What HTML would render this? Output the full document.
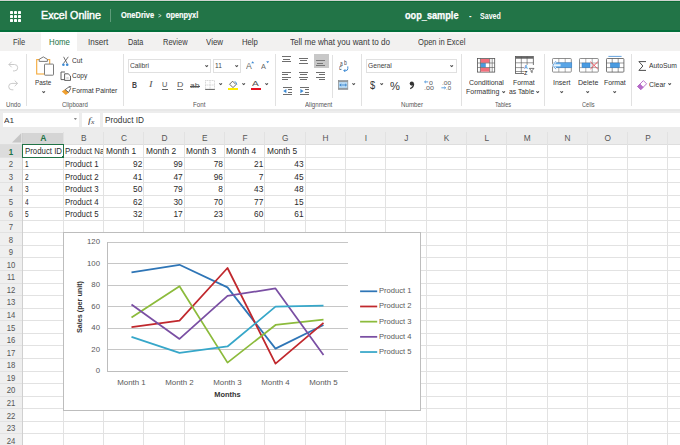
<!DOCTYPE html>
<html><head><meta charset="utf-8"><style>
html,body{margin:0;padding:0;}
body{width:680px;height:445px;overflow:hidden;position:relative;background:#fff;font-family:"Liberation Sans",sans-serif;}
</style></head><body>
<div style="position:absolute;left:0.00px;top:0.00px;width:680.00px;height:32.00px;background:#227447;"></div>
<div style="position:absolute;left:0.00px;top:29.80px;width:680.00px;height:1.80px;background:#036f3b;"></div>
<div style="position:absolute;left:0.00px;top:0.00px;width:680.00px;height:1.00px;background:#cfd3d0;"></div>
<div style="position:absolute;left:0.00px;top:1.00px;width:680.00px;height:1.00px;background:#0d6b35;"></div>
<div style="position:absolute;left:10.00px;top:11.00px;width:3.00px;height:3.00px;background:#ffffff;border-radius:0.4px"></div>
<div style="position:absolute;left:10.00px;top:15.20px;width:3.00px;height:3.00px;background:#ffffff;border-radius:0.4px"></div>
<div style="position:absolute;left:10.00px;top:19.40px;width:3.00px;height:3.00px;background:#ffffff;border-radius:0.4px"></div>
<div style="position:absolute;left:14.20px;top:11.00px;width:3.00px;height:3.00px;background:#ffffff;border-radius:0.4px"></div>
<div style="position:absolute;left:14.20px;top:15.20px;width:3.00px;height:3.00px;background:#ffffff;border-radius:0.4px"></div>
<div style="position:absolute;left:14.20px;top:19.40px;width:3.00px;height:3.00px;background:#ffffff;border-radius:0.4px"></div>
<div style="position:absolute;left:18.40px;top:11.00px;width:3.00px;height:3.00px;background:#ffffff;border-radius:0.4px"></div>
<div style="position:absolute;left:18.40px;top:15.20px;width:3.00px;height:3.00px;background:#ffffff;border-radius:0.4px"></div>
<div style="position:absolute;left:18.40px;top:19.40px;width:3.00px;height:3.00px;background:#ffffff;border-radius:0.4px"></div>
<div style="position:absolute;left:41.00px;top:14.68px;line-height:0;font-size:11.6px;font-weight:400;color:#fff;white-space:nowrap;transform:scaleX(0.9214);transform-origin:0 0;-webkit-text-stroke:0.45px #fff">Excel Online</div>
<div style="position:absolute;left:110.10px;top:9.00px;width:1.00px;height:13.00px;background:#5e9c79;"></div>
<div style="position:absolute;left:120.60px;top:16.16px;line-height:0;font-size:8.2px;font-weight:700;color:#fff;white-space:nowrap;transform:scaleX(0.9106);transform-origin:0 0;-webkit-text-stroke:0.15px #fff">OneDrive</div>
<div style="position:absolute;left:158.20px;top:15.90px;line-height:0;font-size:7.5px;font-weight:400;color:#fff;white-space:nowrap;transform:scaleX(0.7534);transform-origin:0 0;">&gt;</div>
<div style="position:absolute;left:165.60px;top:16.16px;line-height:0;font-size:8.2px;font-weight:700;color:#fff;white-space:nowrap;transform:scaleX(0.8973);transform-origin:0 0;-webkit-text-stroke:0.15px #fff">openpyxl</div>
<div style="position:absolute;left:405.00px;top:15.64px;line-height:0;font-size:10.0px;font-weight:700;color:#fff;white-space:nowrap;transform:scaleX(0.9169);transform-origin:0 0;-webkit-text-stroke:0.25px #fff">oop_sample</div>
<div style="position:absolute;left:468.50px;top:16.15px;line-height:0;font-size:8.5px;font-weight:700;color:#fff;white-space:nowrap;transform:scaleX(0.8832);transform-origin:0 0;">-</div>
<div style="position:absolute;left:480.30px;top:16.19px;line-height:0;font-size:8.4px;font-weight:700;color:#fff;white-space:nowrap;transform:scaleX(0.8445);transform-origin:0 0;">Saved</div>
<div style="position:absolute;left:0.00px;top:31.60px;width:680.00px;height:19.60px;background:#f2f1f0;"></div>
<div style="position:absolute;left:0.00px;top:31.60px;width:680.00px;height:2.20px;background:#f7f6f5;"></div>
<div style="position:absolute;left:40.60px;top:31.60px;width:36.90px;height:19.60px;background:#ffffff;"></div>
<div style="position:absolute;left:12.80px;top:42.56px;line-height:0;font-size:8.2px;font-weight:400;color:#383838;white-space:nowrap;transform:scaleX(0.9158);transform-origin:0 0;">File</div>
<div style="position:absolute;left:48.80px;top:42.56px;line-height:0;font-size:8.2px;font-weight:400;color:#217346;white-space:nowrap;transform:scaleX(0.9555);transform-origin:0 0;">Home</div>
<div style="position:absolute;left:88.20px;top:42.56px;line-height:0;font-size:8.2px;font-weight:400;color:#383838;white-space:nowrap;transform:scaleX(0.9899);transform-origin:0 0;">Insert</div>
<div style="position:absolute;left:127.60px;top:42.56px;line-height:0;font-size:8.2px;font-weight:400;color:#383838;white-space:nowrap;transform:scaleX(0.8891);transform-origin:0 0;">Data</div>
<div style="position:absolute;left:162.90px;top:42.56px;line-height:0;font-size:8.2px;font-weight:400;color:#383838;white-space:nowrap;transform:scaleX(0.9150);transform-origin:0 0;">Review</div>
<div style="position:absolute;left:206.10px;top:42.56px;line-height:0;font-size:8.2px;font-weight:400;color:#383838;white-space:nowrap;transform:scaleX(0.9702);transform-origin:0 0;">View</div>
<div style="position:absolute;left:242.10px;top:42.56px;line-height:0;font-size:8.2px;font-weight:400;color:#383838;white-space:nowrap;transform:scaleX(0.9428);transform-origin:0 0;">Help</div>
<div style="position:absolute;left:289.80px;top:42.56px;line-height:0;font-size:8.2px;font-weight:400;color:#383838;white-space:nowrap;transform:scaleX(0.9902);transform-origin:0 0;">Tell me what you want to do</div>
<div style="position:absolute;left:418.00px;top:42.56px;line-height:0;font-size:8.2px;font-weight:400;color:#383838;white-space:nowrap;transform:scaleX(0.9285);transform-origin:0 0;">Open in Excel</div>
<div style="position:absolute;left:0.00px;top:51.20px;width:680.00px;height:57.70px;background:#ffffff;"></div>
<div style="position:absolute;left:0.00px;top:108.90px;width:680.00px;height:4.20px;background:#e8e8e8;"></div>
<div style="position:absolute;left:0.00px;top:111.00px;width:680.00px;height:16.00px;background:#ededed;"></div>
<div style="position:absolute;left:26.25px;top:53.80px;width:0.90px;height:51.80px;background:#e1e1e1;"></div>
<div style="position:absolute;left:123.05px;top:53.80px;width:0.90px;height:51.80px;background:#e1e1e1;"></div>
<div style="position:absolute;left:274.85px;top:53.80px;width:0.90px;height:51.80px;background:#e1e1e1;"></div>
<div style="position:absolute;left:360.75px;top:53.80px;width:0.90px;height:51.80px;background:#e1e1e1;"></div>
<div style="position:absolute;left:461.05px;top:53.80px;width:0.90px;height:51.80px;background:#e1e1e1;"></div>
<div style="position:absolute;left:543.65px;top:53.80px;width:0.90px;height:51.80px;background:#e1e1e1;"></div>
<div style="position:absolute;left:630.95px;top:53.80px;width:0.90px;height:51.80px;background:#e1e1e1;"></div>
<div style="position:absolute;left:331.85px;top:54.60px;width:0.90px;height:43.00px;background:#e1e1e1;"></div>
<div style="position:absolute;left:5.90px;top:104.55px;line-height:0;font-size:6.5px;font-weight:400;color:#555;white-space:nowrap;transform:scaleX(0.9460);transform-origin:0 0;">Undo</div>
<div style="position:absolute;left:62.20px;top:104.55px;line-height:0;font-size:6.5px;font-weight:400;color:#555;white-space:nowrap;transform:scaleX(0.9273);transform-origin:0 0;">Clipboard</div>
<div style="position:absolute;left:193.40px;top:104.55px;line-height:0;font-size:6.5px;font-weight:400;color:#555;white-space:nowrap;transform:scaleX(0.9611);transform-origin:0 0;">Font</div>
<div style="position:absolute;left:305.00px;top:104.55px;line-height:0;font-size:6.5px;font-weight:400;color:#555;white-space:nowrap;transform:scaleX(0.9445);transform-origin:0 0;">Alignment</div>
<div style="position:absolute;left:400.60px;top:104.55px;line-height:0;font-size:6.5px;font-weight:400;color:#555;white-space:nowrap;transform:scaleX(0.9516);transform-origin:0 0;">Number</div>
<div style="position:absolute;left:494.90px;top:104.55px;line-height:0;font-size:6.5px;font-weight:400;color:#555;white-space:nowrap;transform:scaleX(0.8569);transform-origin:0 0;">Tables</div>
<div style="position:absolute;left:581.70px;top:104.55px;line-height:0;font-size:6.5px;font-weight:400;color:#555;white-space:nowrap;transform:scaleX(0.8652);transform-origin:0 0;">Cells</div>
<svg style="position:absolute;left:8.00px;top:60.00px;overflow:visible" width="11" height="12" viewBox="0 0 11 12"><path d="M0.9 4.5 H6.5 A3.2 3.2 0 0 1 6.5 10.9 H5" fill="none" stroke="#c4c4c4" stroke-width="0.9"/><path d="M3.7 1.7 L0.9 4.5 L3.7 7.3" fill="none" stroke="#c4c4c4" stroke-width="0.9"/></svg>
<svg style="position:absolute;left:8.00px;top:79.00px;overflow:visible" width="11" height="12" viewBox="0 0 11 12"><path d="M9.5 4.4 H3.9 A3.2 3.2 0 0 0 3.9 10.8 H5.4" fill="none" stroke="#c4c4c4" stroke-width="0.9"/><path d="M6.7 1.6 L9.5 4.4 L6.7 7.2" fill="none" stroke="#c4c4c4" stroke-width="0.9"/></svg>
<svg style="position:absolute;left:36.00px;top:56.00px;overflow:visible" width="18" height="20" viewBox="0 0 18 20"><rect x="0.7" y="3.6" width="13" height="14.4" fill="#fff" stroke="#f4a93a" stroke-width="1.1"/><path d="M3.2 5.4 V3.3 L7.3 0.9 L11.4 3.3 V5.4 Z" fill="#fff" stroke="#6d6d6d" stroke-width="0.9"/><rect x="8.5" y="8.1" width="9" height="11.1" rx="0.6" fill="#fff" stroke="#6d6d6d" stroke-width="0.9"/></svg>
<div style="position:absolute;left:35.00px;top:82.61px;line-height:0;font-size:6.9px;font-weight:400;color:#333;white-space:nowrap;transform:scaleX(0.9238);transform-origin:0 0;">Paste</div>
<svg style="position:absolute;left:42.00px;top:90.95px;overflow:visible" width="3.4" height="1.9" viewBox="0 0 3.4 1.9"><path d="M0.4 0.4 L1.7 1.5999999999999999 L3.0 0.4" fill="none" stroke="#444" stroke-width="1.05"/></svg>
<svg style="position:absolute;left:61.00px;top:56.00px;overflow:visible" width="9" height="10.5" viewBox="0 0 9 10.5"><path d="M2.6 0.8 L6.2 7.6 M7.3 0.8 L2.4 7.6" stroke="#505050" stroke-width="0.8" fill="none"/><circle cx="2.4" cy="8.8" r="1.3" fill="#3d8ad4"/><circle cx="6.2" cy="8.8" r="1.3" fill="#3d8ad4"/></svg>
<div style="position:absolute;left:72.00px;top:60.71px;line-height:0;font-size:6.9px;font-weight:400;color:#333;white-space:nowrap;transform:scaleX(0.9686);transform-origin:0 0;">Cut</div>
<svg style="position:absolute;left:60.00px;top:71.00px;overflow:visible" width="11.5" height="10" viewBox="0 0 11.5 10"><path d="M5 1 H1 V8.6 H4.5" fill="none" stroke="#505050" stroke-width="0.9"/><path d="M4.6 2.8 H8.2 L10.5 5 V9.4 H4.6 Z" fill="#fff" stroke="#505050" stroke-width="0.9"/><path d="M6.3 7 H8.7" stroke="#888" stroke-width="0.6"/></svg>
<div style="position:absolute;left:72.00px;top:76.21px;line-height:0;font-size:6.9px;font-weight:400;color:#333;white-space:nowrap;transform:scaleX(0.9498);transform-origin:0 0;">Copy</div>
<svg style="position:absolute;left:60.50px;top:86.00px;overflow:visible" width="11" height="9.5" viewBox="0 0 11 9.5"><path d="M0.8 5.6 L4.8 9 L8 6.4 L4 3.2 Z" fill="#f0a030"/><path d="M4.2 3.6 L7.6 6.4 L9.6 2.6 L8.4 0.6 Z" fill="#fff" stroke="#505050" stroke-width="0.85"/><path d="M8.2 0.8 L10.2 0.6" stroke="#505050" stroke-width="0.8"/></svg>
<div style="position:absolute;left:72.30px;top:90.91px;line-height:0;font-size:6.9px;font-weight:400;color:#333;white-space:nowrap;transform:scaleX(0.9927);transform-origin:0 0;">Format Painter</div>
<div style="position:absolute;left:128.00px;top:59.10px;width:83.20px;height:13.50px;background:#fff;box-sizing:border-box;border:0.9px solid #e0e0e0"></div>
<div style="position:absolute;left:130.00px;top:66.37px;line-height:0;font-size:7.0px;font-weight:400;color:#444;white-space:nowrap;transform:scaleX(0.9628);transform-origin:0 0;">Calibri</div>
<svg style="position:absolute;left:205.10px;top:64.85px;overflow:visible" width="3.4" height="1.9" viewBox="0 0 3.4 1.9"><path d="M0.4 0.4 L1.7 1.5999999999999999 L3.0 0.4" fill="none" stroke="#444" stroke-width="1.05"/></svg>
<div style="position:absolute;left:213.20px;top:59.10px;width:27.60px;height:13.50px;background:#fff;box-sizing:border-box;border:0.9px solid #e0e0e0"></div>
<div style="position:absolute;left:215.00px;top:66.37px;line-height:0;font-size:7.0px;font-weight:400;color:#444;white-space:nowrap;transform:scaleX(0.9358);transform-origin:0 0;">11</div>
<svg style="position:absolute;left:234.80px;top:64.85px;overflow:visible" width="3.4" height="1.9" viewBox="0 0 3.4 1.9"><path d="M0.4 0.4 L1.7 1.5999999999999999 L3.0 0.4" fill="none" stroke="#444" stroke-width="1.05"/></svg>
<div style="position:absolute;left:246.00px;top:66.66px;line-height:0;font-size:8.2px;font-weight:400;color:#666;white-space:nowrap;transform:scaleX(1.0604);transform-origin:0 0;">A</div>
<svg style="position:absolute;left:251.20px;top:61.00px;overflow:visible" width="3.4" height="2.4" viewBox="0 0 3.4 2.4"><path d="M0.2 2.2 L1.7 0.3 L3.2 2.2 Z" fill="#3d8ad4"/></svg>
<div style="position:absolute;left:261.30px;top:67.07px;line-height:0;font-size:7.0px;font-weight:400;color:#666;white-space:nowrap;transform:scaleX(1.0495);transform-origin:0 0;">A</div>
<svg style="position:absolute;left:266.30px;top:61.40px;overflow:visible" width="3.4" height="2.4" viewBox="0 0 3.4 2.4"><path d="M0.2 0.3 L1.7 2.2 L3.2 0.3 Z" fill="#3d8ad4"/></svg>
<div style="position:absolute;left:131.80px;top:85.56px;line-height:0;font-size:8.2px;font-weight:700;color:#444;white-space:nowrap;transform:scaleX(0.8443);transform-origin:0 0;">B</div>
<div style="position:absolute;left:148.60px;top:85.49px;line-height:0;font-size:8.4px;font-weight:400;color:#555;white-space:nowrap;transform:scaleX(1.2855);transform-origin:0 0;font-family:'Liberation Serif',serif;font-style:italic">I</div>
<div style="position:absolute;left:162.00px;top:85.27px;line-height:0;font-size:7.6px;font-weight:400;color:#555;white-space:nowrap;transform:scaleX(0.9839);transform-origin:0 0;">U</div>
<div style="position:absolute;left:162.00px;top:88.85px;width:5.60px;height:0.70px;background:#666;"></div>
<div style="position:absolute;left:176.80px;top:84.97px;line-height:0;font-size:7.6px;font-weight:400;color:#555;white-space:nowrap;transform:scaleX(1.1661);transform-origin:0 0;">D</div>
<div style="position:absolute;left:176.60px;top:88.90px;width:6.80px;height:1.30px;background:#777;"></div>
<div style="position:absolute;left:190.30px;top:85.84px;line-height:0;font-size:7.4px;font-weight:400;color:#555;white-space:nowrap;transform:scaleX(1.1420);transform-origin:0 0;">ab</div>
<div style="position:absolute;left:189.80px;top:85.65px;width:10.20px;height:0.70px;background:#555;"></div>
<svg style="position:absolute;left:205.00px;top:80.00px;overflow:visible" width="10" height="10" viewBox="0 0 10 10"><rect x="0.5" y="0.5" width="9" height="9" fill="none" stroke="#bbb" stroke-width="0.6" stroke-dasharray="1 0.6"/><path d="M5 0.5 V9.5 M0.5 5 H9.5" stroke="#bbb" stroke-width="0.6" stroke-dasharray="1 0.6"/><path d="M0.2 9.4 H9.8" stroke="#555" stroke-width="0.9"/></svg>
<svg style="position:absolute;left:218.90px;top:82.85px;overflow:visible" width="3.4" height="1.9" viewBox="0 0 3.4 1.9"><path d="M0.4 0.4 L1.7 1.5999999999999999 L3.0 0.4" fill="none" stroke="#444" stroke-width="1.05"/></svg>
<svg style="position:absolute;left:228.00px;top:79.50px;overflow:visible" width="10" height="8.5" viewBox="0 0 10 8.5"><path d="M1.6 4.2 L4.6 1.2 L8 4.6 L5 7.6 Z" fill="#fff" stroke="#444" stroke-width="0.8"/><path d="M6.6 1.6 Q8.6 1.8 8.8 4.6" fill="none" stroke="#3d8ad4" stroke-width="0.9"/></svg>
<div style="position:absolute;left:228.20px;top:87.70px;width:9.70px;height:2.00px;background:#ffee00;"></div>
<svg style="position:absolute;left:241.80px;top:82.85px;overflow:visible" width="3.4" height="1.9" viewBox="0 0 3.4 1.9"><path d="M0.4 0.4 L1.7 1.5999999999999999 L3.0 0.4" fill="none" stroke="#444" stroke-width="1.05"/></svg>
<div style="position:absolute;left:252.00px;top:84.20px;line-height:0;font-size:7.8px;font-weight:400;color:#555;white-space:nowrap;transform:scaleX(1.3070);transform-origin:0 0;">A</div>
<div style="position:absolute;left:250.80px;top:87.70px;width:9.80px;height:2.00px;background:#e81123;"></div>
<svg style="position:absolute;left:264.80px;top:82.85px;overflow:visible" width="3.4" height="1.9" viewBox="0 0 3.4 1.9"><path d="M0.4 0.4 L1.7 1.5999999999999999 L3.0 0.4" fill="none" stroke="#444" stroke-width="1.05"/></svg>
<div style="position:absolute;left:313.70px;top:54.10px;width:15.50px;height:13.90px;background:#c8c8c8;"></div>
<div style="position:absolute;left:282.00px;top:55.92px;width:9.00px;height:0.75px;background:#6e6e6e;"></div>
<div style="position:absolute;left:283.20px;top:58.62px;width:6.40px;height:0.75px;background:#6e6e6e;"></div>
<div style="position:absolute;left:282.00px;top:61.12px;width:9.00px;height:0.75px;background:#6e6e6e;"></div>
<div style="position:absolute;left:299.00px;top:57.83px;width:9.00px;height:0.75px;background:#6e6e6e;"></div>
<div style="position:absolute;left:300.20px;top:60.12px;width:6.40px;height:0.75px;background:#6e6e6e;"></div>
<div style="position:absolute;left:299.00px;top:62.83px;width:9.00px;height:0.75px;background:#6e6e6e;"></div>
<div style="position:absolute;left:315.70px;top:60.12px;width:9.30px;height:0.75px;background:#777;"></div>
<div style="position:absolute;left:316.70px;top:62.52px;width:6.80px;height:0.75px;background:#777;"></div>
<div style="position:absolute;left:315.70px;top:65.03px;width:9.30px;height:0.75px;background:#777;"></div>
<div style="position:absolute;left:282.00px;top:71.53px;width:9.00px;height:0.75px;background:#6e6e6e;"></div>
<div style="position:absolute;left:282.00px;top:74.03px;width:6.40px;height:0.75px;background:#6e6e6e;"></div>
<div style="position:absolute;left:282.00px;top:76.62px;width:9.00px;height:0.75px;background:#6e6e6e;"></div>
<div style="position:absolute;left:282.00px;top:79.22px;width:6.40px;height:0.75px;background:#6e6e6e;"></div>
<div style="position:absolute;left:299.00px;top:71.53px;width:9.30px;height:0.75px;background:#6e6e6e;"></div>
<div style="position:absolute;left:300.20px;top:74.03px;width:6.90px;height:0.75px;background:#6e6e6e;"></div>
<div style="position:absolute;left:299.00px;top:76.62px;width:9.30px;height:0.75px;background:#6e6e6e;"></div>
<div style="position:absolute;left:300.20px;top:79.22px;width:6.90px;height:0.75px;background:#6e6e6e;"></div>
<div style="position:absolute;left:316.20px;top:71.53px;width:9.00px;height:0.75px;background:#6e6e6e;"></div>
<div style="position:absolute;left:318.60px;top:74.03px;width:6.60px;height:0.75px;background:#6e6e6e;"></div>
<div style="position:absolute;left:316.20px;top:76.62px;width:9.00px;height:0.75px;background:#6e6e6e;"></div>
<div style="position:absolute;left:318.60px;top:79.22px;width:6.60px;height:0.75px;background:#6e6e6e;"></div>
<div style="position:absolute;left:283.20px;top:86.62px;width:8.80px;height:0.75px;background:#6e6e6e;"></div>
<div style="position:absolute;left:288.40px;top:89.03px;width:3.60px;height:0.75px;background:#6e6e6e;"></div>
<div style="position:absolute;left:288.40px;top:91.62px;width:3.60px;height:0.75px;background:#6e6e6e;"></div>
<div style="position:absolute;left:283.20px;top:94.03px;width:8.80px;height:0.75px;background:#6e6e6e;"></div>
<svg style="position:absolute;left:282.80px;top:88.60px;overflow:visible" width="3.8" height="4.2" viewBox="0 0 3.8 4.2"><path d="M0.2 2.1 L3.4 0 V4.2 Z" fill="#3d8ad4"/></svg>
<div style="position:absolute;left:300.20px;top:86.62px;width:8.80px;height:0.75px;background:#6e6e6e;"></div>
<div style="position:absolute;left:305.40px;top:89.03px;width:3.60px;height:0.75px;background:#6e6e6e;"></div>
<div style="position:absolute;left:305.40px;top:91.62px;width:3.60px;height:0.75px;background:#6e6e6e;"></div>
<div style="position:absolute;left:300.20px;top:94.03px;width:8.80px;height:0.75px;background:#6e6e6e;"></div>
<svg style="position:absolute;left:300.00px;top:88.60px;overflow:visible" width="3.8" height="4.2" viewBox="0 0 3.8 4.2"><path d="M3.6 2.1 L0.4 0 V4.2 Z" fill="#3d8ad4"/></svg>
<div style="position:absolute;left:339.50px;top:63.58px;line-height:0;font-size:6.4px;font-weight:400;color:#444;white-space:nowrap;transform:scaleX(0.7586);transform-origin:0 0;">a</div>
<div style="position:absolute;left:343.60px;top:62.58px;line-height:0;font-size:6.4px;font-weight:400;color:#444;white-space:nowrap;transform:scaleX(0.7866);transform-origin:0 0;">b</div>
<div style="position:absolute;left:339.20px;top:68.38px;line-height:0;font-size:6.4px;font-weight:400;color:#444;white-space:nowrap;transform:scaleX(0.8125);transform-origin:0 0;">c</div>
<svg style="position:absolute;left:343.00px;top:65.50px;overflow:visible" width="6" height="6" viewBox="0 0 6 6"><path d="M4.8 0.4 V2.6 A2 2 0 0 1 2.8 4.6 H0.9 M2.3 3.2 L0.9 4.6 L2.3 6" fill="none" stroke="#3d8ad4" stroke-width="1.0"/></svg>
<svg style="position:absolute;left:337.80px;top:80.00px;overflow:visible" width="10.5" height="10" viewBox="0 0 10.5 10"><rect x="0.4" y="0.4" width="9.4" height="9.2" fill="#b9dcf7" stroke="#8a8a8a" stroke-width="0.7"/><path d="M0.4 1.6 H9.8 M0.4 8.4 H9.8" stroke="#8a8a8a" stroke-width="0.9"/><path d="M1.8 5 H8.4 M3.2 3.8 L1.8 5 L3.2 6.2 M7 3.8 L8.4 5 L7 6.2" fill="none" stroke="#2f7cc8" stroke-width="0.8"/></svg>
<svg style="position:absolute;left:351.50px;top:83.05px;overflow:visible" width="3.4" height="1.9" viewBox="0 0 3.4 1.9"><path d="M0.4 0.4 L1.7 1.5999999999999999 L3.0 0.4" fill="none" stroke="#444" stroke-width="1.05"/></svg>
<div style="position:absolute;left:366.00px;top:59.00px;width:90.60px;height:13.60px;background:#fff;box-sizing:border-box;border:0.9px solid #e0e0e0"></div>
<div style="position:absolute;left:368.00px;top:66.07px;line-height:0;font-size:7.0px;font-weight:400;color:#444;white-space:nowrap;transform:scaleX(0.9557);transform-origin:0 0;">General</div>
<svg style="position:absolute;left:450.30px;top:64.55px;overflow:visible" width="3.4" height="1.9" viewBox="0 0 3.4 1.9"><path d="M0.4 0.4 L1.7 1.5999999999999999 L3.0 0.4" fill="none" stroke="#444" stroke-width="1.05"/></svg>
<div style="position:absolute;left:369.70px;top:85.39px;line-height:0;font-size:11.0px;font-weight:400;color:#333;white-space:nowrap;transform:scaleX(0.8500);transform-origin:0 0;">$</div>
<svg style="position:absolute;left:380.10px;top:83.35px;overflow:visible" width="3.4" height="1.9" viewBox="0 0 3.4 1.9"><path d="M0.4 0.4 L1.7 1.5999999999999999 L3.0 0.4" fill="none" stroke="#444" stroke-width="1.05"/></svg>
<div style="position:absolute;left:390.00px;top:85.73px;line-height:0;font-size:10.6px;font-weight:400;color:#333;white-space:nowrap;transform:scaleX(1.0504);transform-origin:0 0;">%</div>
<svg style="position:absolute;left:409.40px;top:81.20px;overflow:visible" width="5.5" height="8" viewBox="0 0 5.5 8"><circle cx="2.8" cy="2.6" r="2.1" fill="#333"/><path d="M4.6 2.8 Q4.6 6.4 1.2 7.6" fill="none" stroke="#333" stroke-width="1.3"/></svg>
<svg style="position:absolute;left:423.50px;top:80.00px;overflow:visible" width="11" height="10" viewBox="0 0 11 10"><path d="M4.2 1.9 H0.6 M1.8 0.8 L0.6 1.9 L1.8 3" fill="none" stroke="#3d8ad4" stroke-width="0.8"/></svg>
<div style="position:absolute;left:428.60px;top:82.73px;line-height:0;font-size:5.4px;font-weight:400;color:#555;white-space:nowrap;transform:scaleX(1.2986);transform-origin:0 0;">0</div>
<div style="position:absolute;left:423.80px;top:87.73px;line-height:0;font-size:5.4px;font-weight:400;color:#555;white-space:nowrap;transform:scaleX(1.3188);transform-origin:0 0;">.00</div>
<svg style="position:absolute;left:440.50px;top:84.50px;overflow:visible" width="11" height="6" viewBox="0 0 11 6"><path d="M0.4 2.8 H4.6 M3.4 1.7 L4.6 2.8 L3.4 3.9" fill="none" stroke="#3d8ad4" stroke-width="0.8"/></svg>
<div style="position:absolute;left:441.50px;top:82.73px;line-height:0;font-size:5.4px;font-weight:400;color:#555;white-space:nowrap;transform:scaleX(1.2122);transform-origin:0 0;">.00</div>
<div style="position:absolute;left:445.50px;top:87.73px;line-height:0;font-size:5.4px;font-weight:400;color:#555;white-space:nowrap;transform:scaleX(1.1324);transform-origin:0 0;">.0</div>
<svg style="position:absolute;left:477.00px;top:58.00px;overflow:visible" width="18.5" height="14.5" viewBox="0 0 18.5 14.5"><rect x="0.5" y="0.5" width="17.2" height="13.6" fill="#fff" stroke="#555" stroke-width="0.8"/><rect x="3.4" y="1" width="9.2" height="3.8" fill="#f36f7c"/><rect x="3.4" y="9.7" width="9.2" height="3.9" fill="#f36f7c"/><rect x="3.4" y="5.1" width="5.4" height="4.3" fill="#4a9be0"/><path d="M0.5 5 H17.7 M0.5 9.5 H17.7 M3.4 0.5 V14.1 M12.7 0.5 V14.1 M15.2 0.5 V14.1" stroke="#555" stroke-width="0.6"/></svg>
<div style="position:absolute;left:468.80px;top:82.71px;line-height:0;font-size:6.9px;font-weight:400;color:#333;white-space:nowrap;transform:scaleX(1.0109);transform-origin:0 0;">Conditional</div>
<div style="position:absolute;left:466.20px;top:91.91px;line-height:0;font-size:6.9px;font-weight:400;color:#333;white-space:nowrap;transform:scaleX(1.0128);transform-origin:0 0;">Formatting</div>
<svg style="position:absolute;left:501.90px;top:91.05px;overflow:visible" width="3.4" height="1.9" viewBox="0 0 3.4 1.9"><path d="M0.4 0.4 L1.7 1.5999999999999999 L3.0 0.4" fill="none" stroke="#444" stroke-width="1.05"/></svg>
<svg style="position:absolute;left:515.00px;top:56.00px;overflow:visible" width="20" height="19.5" viewBox="0 0 20 19.5"><rect x="0.5" y="0.5" width="17.8" height="17" fill="#fff" stroke="#555" stroke-width="0.8"/><rect x="0.5" y="0.5" width="17.8" height="2.2" fill="#666"/><path d="M0.5 6.8 H18.3 M0.5 11.6 H9 M0.5 15.5 H9 M6.3 0.5 V17.5 M12.1 0.5 V9" stroke="#555" stroke-width="0.6"/><rect x="9" y="9" width="11" height="10.5" fill="#fff"/></svg>
<div style="position:absolute;left:524.00px;top:66.79px;line-height:0;font-size:5.8px;font-weight:700;color:#3d8ad4;white-space:nowrap;transform:scaleX(0.8595);transform-origin:0 0;">A</div>
<div style="position:absolute;left:524.20px;top:72.99px;line-height:0;font-size:5.8px;font-weight:700;color:#444;white-space:nowrap;transform:scaleX(0.9597);transform-origin:0 0;">Z</div>
<svg style="position:absolute;left:529.30px;top:68.20px;overflow:visible" width="5.5" height="5" viewBox="0 0 5.5 5"><path d="M0.3 0.4 H5 L3.2 2.5 V4.6 L2.1 3.9 V2.5 Z" fill="none" stroke="#555" stroke-width="0.8"/></svg>
<div style="position:absolute;left:513.00px;top:82.71px;line-height:0;font-size:6.9px;font-weight:400;color:#333;white-space:nowrap;transform:scaleX(0.9884);transform-origin:0 0;">Format</div>
<div style="position:absolute;left:508.80px;top:91.91px;line-height:0;font-size:6.9px;font-weight:400;color:#333;white-space:nowrap;transform:scaleX(0.9853);transform-origin:0 0;">as Table</div>
<svg style="position:absolute;left:536.30px;top:91.05px;overflow:visible" width="3.4" height="1.9" viewBox="0 0 3.4 1.9"><path d="M0.4 0.4 L1.7 1.5999999999999999 L3.0 0.4" fill="none" stroke="#444" stroke-width="1.05"/></svg>
<svg style="position:absolute;left:552.00px;top:58.00px;overflow:visible" width="20" height="15" viewBox="0 0 20 15"><rect x="0.5" y="0.5" width="18.8" height="13.6" rx="0.8" fill="#fff" stroke="#6a6a6a" stroke-width="0.75"/><path d="M0.5 5 H19.3 M0.5 9.6 H19.3 M6.8 0.5 V14.1 M13.2 0.5 V14.1" stroke="#6a6a6a" stroke-width="0.55"/><rect x="3.8" y="4.8" width="16" height="4.8" fill="#5aa5e6" stroke="#2f7cc8" stroke-width="0.5"/><path d="M8.5 7.2 H1.2" stroke="#fff" stroke-width="2.2"/><path d="M3.9 3.2 L0.9 7.2 L3.9 11.2" fill="none" stroke="#fff" stroke-width="2"/><path d="M3.9 3.2 L0.9 7.2 L3.9 11.2" fill="none" stroke="#3d8ad4" stroke-width="0.8"/><path d="M8.5 6.2 H2 M8.5 8.2 H2" stroke="#8cc3ef" stroke-width="0.6"/></svg>
<svg style="position:absolute;left:578.80px;top:58.00px;overflow:visible" width="20" height="15" viewBox="0 0 20 15"><rect x="0.5" y="0.5" width="18.8" height="13.6" rx="0.8" fill="#fff" stroke="#6a6a6a" stroke-width="0.75"/><path d="M0.5 5 H19.3 M0.5 9.6 H19.3 M6.8 0.5 V14.1 M13.2 0.5 V14.1" stroke="#6a6a6a" stroke-width="0.55"/><rect x="3" y="5" width="8" height="4.6" fill="#4a9be0" stroke="#2f7cc8" stroke-width="0.5"/><path d="M11.4 3.8 L18.8 11 M18.8 3.8 L11.4 11" stroke="#e8434f" stroke-width="0.9"/></svg>
<svg style="position:absolute;left:605.50px;top:55.00px;overflow:visible" width="18.5" height="18" viewBox="0 0 18.5 18"><path d="M2.4 1.4 H15.6" stroke="#3d8ad4" stroke-width="0.8"/><g transform="translate(0,3)"><rect x="0.5" y="0.5" width="17.4" height="13.6" rx="0.8" fill="#fff" stroke="#555" stroke-width="0.8"/><path d="M0.5 5 H17.9 M0.5 9.6 H17.9 M6.2 0.5 V14.1 M12.2 0.5 V14.1" stroke="#555" stroke-width="0.6"/><rect x="4.4" y="5" width="9" height="4.6" fill="#4a9be0" stroke="#2f7cc8" stroke-width="0.5"/></g></svg>
<div style="position:absolute;left:553.00px;top:82.51px;line-height:0;font-size:6.9px;font-weight:400;color:#333;white-space:nowrap;transform:scaleX(1.0083);transform-origin:0 0;">Insert</div>
<svg style="position:absolute;left:560.20px;top:90.75px;overflow:visible" width="3.4" height="1.9" viewBox="0 0 3.4 1.9"><path d="M0.4 0.4 L1.7 1.5999999999999999 L3.0 0.4" fill="none" stroke="#444" stroke-width="1.05"/></svg>
<div style="position:absolute;left:577.80px;top:82.51px;line-height:0;font-size:6.9px;font-weight:400;color:#333;white-space:nowrap;transform:scaleX(1.0228);transform-origin:0 0;">Delete</div>
<svg style="position:absolute;left:586.00px;top:90.75px;overflow:visible" width="3.4" height="1.9" viewBox="0 0 3.4 1.9"><path d="M0.4 0.4 L1.7 1.5999999999999999 L3.0 0.4" fill="none" stroke="#444" stroke-width="1.05"/></svg>
<div style="position:absolute;left:603.60px;top:82.51px;line-height:0;font-size:6.9px;font-weight:400;color:#333;white-space:nowrap;transform:scaleX(0.9976);transform-origin:0 0;">Format</div>
<svg style="position:absolute;left:612.80px;top:90.75px;overflow:visible" width="3.4" height="1.9" viewBox="0 0 3.4 1.9"><path d="M0.4 0.4 L1.7 1.5999999999999999 L3.0 0.4" fill="none" stroke="#444" stroke-width="1.05"/></svg>
<svg style="position:absolute;left:638.30px;top:61.20px;overflow:visible" width="8.5" height="10" viewBox="0 0 8.5 10"><path d="M8 0.6 H0.9 L4.9 5 L0.9 9.4 H8" fill="none" stroke="#444" stroke-width="0.95" stroke-linejoin="miter"/></svg>
<div style="position:absolute;left:649.20px;top:65.51px;line-height:0;font-size:6.9px;font-weight:400;color:#333;white-space:nowrap;transform:scaleX(0.9795);transform-origin:0 0;">AutoSum</div>
<svg style="position:absolute;left:637.00px;top:79.50px;overflow:visible" width="10.5" height="10.5" viewBox="0 0 10.5 10.5"><path d="M0.6 6.4 L6.4 0.6 L9.6 3.8 L3.8 9.6 Z" fill="#fff" stroke="#b05ac4" stroke-width="0.85"/><path d="M0.6 6.4 L3.0 4.0 L6.2 7.2 L3.8 9.6 Z" fill="#b46bc8" stroke="#b05ac4" stroke-width="0.6"/></svg>
<div style="position:absolute;left:649.20px;top:84.91px;line-height:0;font-size:6.9px;font-weight:400;color:#333;white-space:nowrap;transform:scaleX(1.0067);transform-origin:0 0;">Clear</div>
<svg style="position:absolute;left:668.10px;top:83.35px;overflow:visible" width="3.4" height="1.9" viewBox="0 0 3.4 1.9"><path d="M0.4 0.4 L1.7 1.5999999999999999 L3.0 0.4" fill="none" stroke="#444" stroke-width="1.05"/></svg>
<div style="position:absolute;left:2.80px;top:113.10px;width:76.10px;height:13.70px;background:#fff;"></div>
<div style="position:absolute;left:3.60px;top:121.30px;line-height:0;font-size:7.8px;font-weight:400;color:#333;white-space:nowrap;transform:scaleX(1.0586);transform-origin:0 0;">A1</div>
<svg style="position:absolute;left:74.00px;top:118.45px;overflow:visible" width="2.8" height="1.5" viewBox="0 0 2.8 1.5"><path d="M0.4 0.4 L1.4 1.2 L2.4 0.4" fill="none" stroke="#666" stroke-width="1.05"/></svg>
<div style="position:absolute;left:82.00px;top:113.10px;width:18.00px;height:13.70px;background:#fff;"></div>
<div style="position:absolute;left:87.60px;top:120.60px;line-height:0;font-size:7.8px;font-weight:400;color:#444;white-space:nowrap;transform:scaleX(1.4000);transform-origin:0 0;font-family:'Liberation Serif',serif;font-style:italic">f</div>
<div style="position:absolute;left:90.80px;top:121.63px;line-height:0;font-size:5.4px;font-weight:400;color:#444;white-space:nowrap;transform:scaleX(1.4000);transform-origin:0 0;font-family:'Liberation Serif',serif;font-style:italic">x</div>
<div style="position:absolute;left:103.00px;top:113.10px;width:577.00px;height:13.70px;background:#fff;"></div>
<div style="position:absolute;left:104.80px;top:120.12px;line-height:0;font-size:8.3px;font-weight:400;color:#333;white-space:nowrap;transform:scaleX(0.9946);transform-origin:0 0;">Product ID</div>
<div style="position:absolute;left:0.00px;top:126.80px;width:680.00px;height:17.10px;background:#ececec;"></div>
<div style="position:absolute;left:0.00px;top:143.90px;width:22.30px;height:301.10px;background:#efefef;"></div>
<div style="position:absolute;left:22.30px;top:143.90px;width:657.70px;height:301.10px;background:#ffffff;"></div>
<div style="position:absolute;left:23.00px;top:133.10px;width:40.80px;height:10.80px;background:#d5d5d5;"></div>
<div style="position:absolute;left:0.00px;top:143.90px;width:22.30px;height:13.38px;background:#dcdcdc;"></div>
<svg style="position:absolute;left:11.90px;top:133.30px;overflow:visible" width="9.4" height="9.4" viewBox="0 0 9.4 9.4"><path d="M9.4 0 V9.4 H0 Z" fill="#c6c6c6"/></svg>
<div style="position:absolute;left:0.00px;top:156.78px;width:680.00px;height:1.00px;background:#e2e2e2;"></div>
<div style="position:absolute;left:0.00px;top:169.35px;width:680.00px;height:1.00px;background:#e2e2e2;"></div>
<div style="position:absolute;left:0.00px;top:181.93px;width:680.00px;height:1.00px;background:#e2e2e2;"></div>
<div style="position:absolute;left:0.00px;top:194.50px;width:680.00px;height:1.00px;background:#e2e2e2;"></div>
<div style="position:absolute;left:0.00px;top:207.08px;width:680.00px;height:1.00px;background:#e2e2e2;"></div>
<div style="position:absolute;left:0.00px;top:219.66px;width:680.00px;height:1.00px;background:#e2e2e2;"></div>
<div style="position:absolute;left:0.00px;top:232.23px;width:680.00px;height:1.00px;background:#e2e2e2;"></div>
<div style="position:absolute;left:0.00px;top:244.81px;width:680.00px;height:1.00px;background:#e2e2e2;"></div>
<div style="position:absolute;left:0.00px;top:257.38px;width:680.00px;height:1.00px;background:#e2e2e2;"></div>
<div style="position:absolute;left:0.00px;top:269.96px;width:680.00px;height:1.00px;background:#e2e2e2;"></div>
<div style="position:absolute;left:0.00px;top:282.54px;width:680.00px;height:1.00px;background:#e2e2e2;"></div>
<div style="position:absolute;left:0.00px;top:295.11px;width:680.00px;height:1.00px;background:#e2e2e2;"></div>
<div style="position:absolute;left:0.00px;top:307.69px;width:680.00px;height:1.00px;background:#e2e2e2;"></div>
<div style="position:absolute;left:0.00px;top:320.26px;width:680.00px;height:1.00px;background:#e2e2e2;"></div>
<div style="position:absolute;left:0.00px;top:332.84px;width:680.00px;height:1.00px;background:#e2e2e2;"></div>
<div style="position:absolute;left:0.00px;top:345.42px;width:680.00px;height:1.00px;background:#e2e2e2;"></div>
<div style="position:absolute;left:0.00px;top:357.99px;width:680.00px;height:1.00px;background:#e2e2e2;"></div>
<div style="position:absolute;left:0.00px;top:370.57px;width:680.00px;height:1.00px;background:#e2e2e2;"></div>
<div style="position:absolute;left:0.00px;top:383.14px;width:680.00px;height:1.00px;background:#e2e2e2;"></div>
<div style="position:absolute;left:0.00px;top:395.72px;width:680.00px;height:1.00px;background:#e2e2e2;"></div>
<div style="position:absolute;left:0.00px;top:408.30px;width:680.00px;height:1.00px;background:#e2e2e2;"></div>
<div style="position:absolute;left:0.00px;top:420.87px;width:680.00px;height:1.00px;background:#e2e2e2;"></div>
<div style="position:absolute;left:0.00px;top:433.45px;width:680.00px;height:1.00px;background:#e2e2e2;"></div>
<div style="position:absolute;left:0.00px;top:143.55px;width:680.00px;height:0.70px;background:#dedede;"></div>
<div style="position:absolute;left:62.80px;top:132.40px;width:1.00px;height:312.60px;background:#e2e2e2;"></div>
<div style="position:absolute;left:103.11px;top:132.40px;width:1.00px;height:312.60px;background:#e2e2e2;"></div>
<div style="position:absolute;left:143.42px;top:132.40px;width:1.00px;height:312.60px;background:#e2e2e2;"></div>
<div style="position:absolute;left:183.73px;top:132.40px;width:1.00px;height:312.60px;background:#e2e2e2;"></div>
<div style="position:absolute;left:224.04px;top:132.40px;width:1.00px;height:312.60px;background:#e2e2e2;"></div>
<div style="position:absolute;left:264.35px;top:132.40px;width:1.00px;height:312.60px;background:#e2e2e2;"></div>
<div style="position:absolute;left:304.66px;top:132.40px;width:1.00px;height:312.60px;background:#e2e2e2;"></div>
<div style="position:absolute;left:344.97px;top:132.40px;width:1.00px;height:312.60px;background:#e2e2e2;"></div>
<div style="position:absolute;left:385.28px;top:132.40px;width:1.00px;height:312.60px;background:#e2e2e2;"></div>
<div style="position:absolute;left:425.59px;top:132.40px;width:1.00px;height:312.60px;background:#e2e2e2;"></div>
<div style="position:absolute;left:465.90px;top:132.40px;width:1.00px;height:312.60px;background:#e2e2e2;"></div>
<div style="position:absolute;left:506.21px;top:132.40px;width:1.00px;height:312.60px;background:#e2e2e2;"></div>
<div style="position:absolute;left:546.52px;top:132.40px;width:1.00px;height:312.60px;background:#e2e2e2;"></div>
<div style="position:absolute;left:586.83px;top:132.40px;width:1.00px;height:312.60px;background:#e2e2e2;"></div>
<div style="position:absolute;left:627.14px;top:132.40px;width:1.00px;height:312.60px;background:#e2e2e2;"></div>
<div style="position:absolute;left:667.45px;top:132.40px;width:1.00px;height:312.60px;background:#e2e2e2;"></div>
<div style="position:absolute;left:707.76px;top:132.40px;width:1.00px;height:312.60px;background:#e2e2e2;"></div>
<div style="position:absolute;left:21.85px;top:133.00px;width:0.90px;height:312.00px;background:#d0d0d0;"></div>
<div style="position:absolute;left:-256.56px;width:600px;text-align:center;top:137.82px;line-height:0;font-size:8.6px;font-weight:700;color:#217346;white-space:nowrap;">A</div>
<div style="position:absolute;left:-216.25px;width:600px;text-align:center;top:137.82px;line-height:0;font-size:8.3px;font-weight:400;color:#555;white-space:nowrap;">B</div>
<div style="position:absolute;left:-175.94px;width:600px;text-align:center;top:137.82px;line-height:0;font-size:8.3px;font-weight:400;color:#555;white-space:nowrap;">C</div>
<div style="position:absolute;left:-135.62px;width:600px;text-align:center;top:137.82px;line-height:0;font-size:8.3px;font-weight:400;color:#555;white-space:nowrap;">D</div>
<div style="position:absolute;left:-95.31px;width:600px;text-align:center;top:137.82px;line-height:0;font-size:8.3px;font-weight:400;color:#555;white-space:nowrap;">E</div>
<div style="position:absolute;left:-55.00px;width:600px;text-align:center;top:137.82px;line-height:0;font-size:8.3px;font-weight:400;color:#555;white-space:nowrap;">F</div>
<div style="position:absolute;left:-14.69px;width:600px;text-align:center;top:137.82px;line-height:0;font-size:8.3px;font-weight:400;color:#555;white-space:nowrap;">G</div>
<div style="position:absolute;left:25.62px;width:600px;text-align:center;top:137.82px;line-height:0;font-size:8.3px;font-weight:400;color:#555;white-space:nowrap;">H</div>
<div style="position:absolute;left:65.93px;width:600px;text-align:center;top:137.82px;line-height:0;font-size:8.3px;font-weight:400;color:#555;white-space:nowrap;">I</div>
<div style="position:absolute;left:106.24px;width:600px;text-align:center;top:137.82px;line-height:0;font-size:8.3px;font-weight:400;color:#555;white-space:nowrap;">J</div>
<div style="position:absolute;left:146.55px;width:600px;text-align:center;top:137.82px;line-height:0;font-size:8.3px;font-weight:400;color:#555;white-space:nowrap;">K</div>
<div style="position:absolute;left:186.86px;width:600px;text-align:center;top:137.82px;line-height:0;font-size:8.3px;font-weight:400;color:#555;white-space:nowrap;">L</div>
<div style="position:absolute;left:227.16px;width:600px;text-align:center;top:137.82px;line-height:0;font-size:8.3px;font-weight:400;color:#555;white-space:nowrap;">M</div>
<div style="position:absolute;left:267.47px;width:600px;text-align:center;top:137.82px;line-height:0;font-size:8.3px;font-weight:400;color:#555;white-space:nowrap;">N</div>
<div style="position:absolute;left:307.78px;width:600px;text-align:center;top:137.82px;line-height:0;font-size:8.3px;font-weight:400;color:#555;white-space:nowrap;">O</div>
<div style="position:absolute;left:348.10px;width:600px;text-align:center;top:137.82px;line-height:0;font-size:8.3px;font-weight:400;color:#555;white-space:nowrap;">P</div>
<div style="position:absolute;left:-288.80px;width:600px;text-align:center;top:151.55px;line-height:0;font-size:8.8px;font-weight:700;color:#217346;white-space:nowrap;transform:scaleX(0.9);transform-origin:300px 0">1</div>
<div style="position:absolute;left:-288.80px;width:600px;text-align:center;top:164.13px;line-height:0;font-size:8.8px;font-weight:400;color:#555;white-space:nowrap;transform:scaleX(0.88);transform-origin:300px 0">2</div>
<div style="position:absolute;left:-288.80px;width:600px;text-align:center;top:176.70px;line-height:0;font-size:8.8px;font-weight:400;color:#555;white-space:nowrap;transform:scaleX(0.88);transform-origin:300px 0">3</div>
<div style="position:absolute;left:-288.80px;width:600px;text-align:center;top:189.28px;line-height:0;font-size:8.8px;font-weight:400;color:#555;white-space:nowrap;transform:scaleX(0.88);transform-origin:300px 0">4</div>
<div style="position:absolute;left:-288.80px;width:600px;text-align:center;top:201.85px;line-height:0;font-size:8.8px;font-weight:400;color:#555;white-space:nowrap;transform:scaleX(0.88);transform-origin:300px 0">5</div>
<div style="position:absolute;left:-288.80px;width:600px;text-align:center;top:214.43px;line-height:0;font-size:8.8px;font-weight:400;color:#555;white-space:nowrap;transform:scaleX(0.88);transform-origin:300px 0">6</div>
<div style="position:absolute;left:-288.80px;width:600px;text-align:center;top:227.01px;line-height:0;font-size:8.8px;font-weight:400;color:#555;white-space:nowrap;transform:scaleX(0.88);transform-origin:300px 0">7</div>
<div style="position:absolute;left:-288.80px;width:600px;text-align:center;top:239.58px;line-height:0;font-size:8.8px;font-weight:400;color:#555;white-space:nowrap;transform:scaleX(0.88);transform-origin:300px 0">8</div>
<div style="position:absolute;left:-288.80px;width:600px;text-align:center;top:252.16px;line-height:0;font-size:8.8px;font-weight:400;color:#555;white-space:nowrap;transform:scaleX(0.88);transform-origin:300px 0">9</div>
<div style="position:absolute;left:-288.80px;width:600px;text-align:center;top:264.73px;line-height:0;font-size:8.8px;font-weight:400;color:#555;white-space:nowrap;transform:scaleX(0.88);transform-origin:300px 0">10</div>
<div style="position:absolute;left:-288.80px;width:600px;text-align:center;top:277.31px;line-height:0;font-size:8.8px;font-weight:400;color:#555;white-space:nowrap;transform:scaleX(0.88);transform-origin:300px 0">11</div>
<div style="position:absolute;left:-288.80px;width:600px;text-align:center;top:289.89px;line-height:0;font-size:8.8px;font-weight:400;color:#555;white-space:nowrap;transform:scaleX(0.88);transform-origin:300px 0">12</div>
<div style="position:absolute;left:-288.80px;width:600px;text-align:center;top:302.46px;line-height:0;font-size:8.8px;font-weight:400;color:#555;white-space:nowrap;transform:scaleX(0.88);transform-origin:300px 0">13</div>
<div style="position:absolute;left:-288.80px;width:600px;text-align:center;top:315.04px;line-height:0;font-size:8.8px;font-weight:400;color:#555;white-space:nowrap;transform:scaleX(0.88);transform-origin:300px 0">14</div>
<div style="position:absolute;left:-288.80px;width:600px;text-align:center;top:327.61px;line-height:0;font-size:8.8px;font-weight:400;color:#555;white-space:nowrap;transform:scaleX(0.88);transform-origin:300px 0">15</div>
<div style="position:absolute;left:-288.80px;width:600px;text-align:center;top:340.19px;line-height:0;font-size:8.8px;font-weight:400;color:#555;white-space:nowrap;transform:scaleX(0.88);transform-origin:300px 0">16</div>
<div style="position:absolute;left:-288.80px;width:600px;text-align:center;top:352.77px;line-height:0;font-size:8.8px;font-weight:400;color:#555;white-space:nowrap;transform:scaleX(0.88);transform-origin:300px 0">17</div>
<div style="position:absolute;left:-288.80px;width:600px;text-align:center;top:365.34px;line-height:0;font-size:8.8px;font-weight:400;color:#555;white-space:nowrap;transform:scaleX(0.88);transform-origin:300px 0">18</div>
<div style="position:absolute;left:-288.80px;width:600px;text-align:center;top:377.92px;line-height:0;font-size:8.8px;font-weight:400;color:#555;white-space:nowrap;transform:scaleX(0.88);transform-origin:300px 0">19</div>
<div style="position:absolute;left:-288.80px;width:600px;text-align:center;top:390.49px;line-height:0;font-size:8.8px;font-weight:400;color:#555;white-space:nowrap;transform:scaleX(0.88);transform-origin:300px 0">20</div>
<div style="position:absolute;left:-288.80px;width:600px;text-align:center;top:403.07px;line-height:0;font-size:8.8px;font-weight:400;color:#555;white-space:nowrap;transform:scaleX(0.88);transform-origin:300px 0">21</div>
<div style="position:absolute;left:-288.80px;width:600px;text-align:center;top:415.65px;line-height:0;font-size:8.8px;font-weight:400;color:#555;white-space:nowrap;transform:scaleX(0.88);transform-origin:300px 0">22</div>
<div style="position:absolute;left:-288.80px;width:600px;text-align:center;top:428.22px;line-height:0;font-size:8.8px;font-weight:400;color:#555;white-space:nowrap;transform:scaleX(0.88);transform-origin:300px 0">23</div>
<div style="position:absolute;left:-288.80px;width:600px;text-align:center;top:440.80px;line-height:0;font-size:8.8px;font-weight:400;color:#555;white-space:nowrap;transform:scaleX(0.88);transform-origin:300px 0">24</div>
<div style="position:absolute;left:63.8px;top:144px;width:39.5px;height:13px;overflow:hidden">
<div style="position:absolute;left:1.10px;top:7.42px;line-height:0;font-size:8.3px;font-weight:400;color:#2a2a2a;white-space:nowrap;transform:scaleX(0.9458);transform-origin:0 0;">Product Name</div>
</div>
<div style="position:absolute;left:24.90px;top:151.42px;line-height:0;font-size:8.3px;font-weight:400;color:#2a2a2a;white-space:nowrap;transform:scaleX(0.9436);transform-origin:0 0;">Product ID</div>
<div style="position:absolute;left:105.51px;top:151.42px;line-height:0;font-size:8.3px;font-weight:400;color:#2a2a2a;white-space:nowrap;transform:scaleX(1.0070);transform-origin:0 0;">Month 1</div>
<div style="position:absolute;left:145.82px;top:151.42px;line-height:0;font-size:8.3px;font-weight:400;color:#2a2a2a;white-space:nowrap;transform:scaleX(1.0070);transform-origin:0 0;">Month 2</div>
<div style="position:absolute;left:186.13px;top:151.42px;line-height:0;font-size:8.3px;font-weight:400;color:#2a2a2a;white-space:nowrap;transform:scaleX(1.0070);transform-origin:0 0;">Month 3</div>
<div style="position:absolute;left:226.44px;top:151.42px;line-height:0;font-size:8.3px;font-weight:400;color:#2a2a2a;white-space:nowrap;transform:scaleX(1.0070);transform-origin:0 0;">Month 4</div>
<div style="position:absolute;left:266.75px;top:151.42px;line-height:0;font-size:8.3px;font-weight:400;color:#2a2a2a;white-space:nowrap;transform:scaleX(1.0070);transform-origin:0 0;">Month 5</div>
<div style="position:absolute;left:24.89px;top:164.00px;line-height:0;font-size:8.3px;font-weight:400;color:#2a2a2a;white-space:nowrap;transform:scaleX(0.7799);transform-origin:0 0;">1</div>
<div style="position:absolute;left:65.20px;top:164.00px;line-height:0;font-size:8.3px;font-weight:400;color:#2a2a2a;white-space:nowrap;transform:scaleX(0.9458);transform-origin:0 0;">Product 1</div>
<div style="position:absolute;right:537.68px;top:164.00px;line-height:0;font-size:8.3px;font-weight:400;color:#2a2a2a;white-space:nowrap;">92</div>
<div style="position:absolute;right:497.37px;top:164.00px;line-height:0;font-size:8.3px;font-weight:400;color:#2a2a2a;white-space:nowrap;">99</div>
<div style="position:absolute;right:457.06px;top:164.00px;line-height:0;font-size:8.3px;font-weight:400;color:#2a2a2a;white-space:nowrap;">78</div>
<div style="position:absolute;right:416.75px;top:164.00px;line-height:0;font-size:8.3px;font-weight:400;color:#2a2a2a;white-space:nowrap;">21</div>
<div style="position:absolute;right:376.44px;top:164.00px;line-height:0;font-size:8.3px;font-weight:400;color:#2a2a2a;white-space:nowrap;">43</div>
<div style="position:absolute;left:24.89px;top:176.58px;line-height:0;font-size:8.3px;font-weight:400;color:#2a2a2a;white-space:nowrap;transform:scaleX(0.7799);transform-origin:0 0;">2</div>
<div style="position:absolute;left:65.20px;top:176.58px;line-height:0;font-size:8.3px;font-weight:400;color:#2a2a2a;white-space:nowrap;transform:scaleX(0.9458);transform-origin:0 0;">Product 2</div>
<div style="position:absolute;right:537.68px;top:176.58px;line-height:0;font-size:8.3px;font-weight:400;color:#2a2a2a;white-space:nowrap;">41</div>
<div style="position:absolute;right:497.37px;top:176.58px;line-height:0;font-size:8.3px;font-weight:400;color:#2a2a2a;white-space:nowrap;">47</div>
<div style="position:absolute;right:457.06px;top:176.58px;line-height:0;font-size:8.3px;font-weight:400;color:#2a2a2a;white-space:nowrap;">96</div>
<div style="position:absolute;right:416.75px;top:176.58px;line-height:0;font-size:8.3px;font-weight:400;color:#2a2a2a;white-space:nowrap;">7</div>
<div style="position:absolute;right:376.44px;top:176.58px;line-height:0;font-size:8.3px;font-weight:400;color:#2a2a2a;white-space:nowrap;">45</div>
<div style="position:absolute;left:24.89px;top:189.15px;line-height:0;font-size:8.3px;font-weight:400;color:#2a2a2a;white-space:nowrap;transform:scaleX(0.7799);transform-origin:0 0;">3</div>
<div style="position:absolute;left:65.20px;top:189.15px;line-height:0;font-size:8.3px;font-weight:400;color:#2a2a2a;white-space:nowrap;transform:scaleX(0.9458);transform-origin:0 0;">Product 3</div>
<div style="position:absolute;right:537.68px;top:189.15px;line-height:0;font-size:8.3px;font-weight:400;color:#2a2a2a;white-space:nowrap;">50</div>
<div style="position:absolute;right:497.37px;top:189.15px;line-height:0;font-size:8.3px;font-weight:400;color:#2a2a2a;white-space:nowrap;">79</div>
<div style="position:absolute;right:457.06px;top:189.15px;line-height:0;font-size:8.3px;font-weight:400;color:#2a2a2a;white-space:nowrap;">8</div>
<div style="position:absolute;right:416.75px;top:189.15px;line-height:0;font-size:8.3px;font-weight:400;color:#2a2a2a;white-space:nowrap;">43</div>
<div style="position:absolute;right:376.44px;top:189.15px;line-height:0;font-size:8.3px;font-weight:400;color:#2a2a2a;white-space:nowrap;">48</div>
<div style="position:absolute;left:24.89px;top:201.73px;line-height:0;font-size:8.3px;font-weight:400;color:#2a2a2a;white-space:nowrap;transform:scaleX(0.7799);transform-origin:0 0;">4</div>
<div style="position:absolute;left:65.20px;top:201.73px;line-height:0;font-size:8.3px;font-weight:400;color:#2a2a2a;white-space:nowrap;transform:scaleX(0.9458);transform-origin:0 0;">Product 4</div>
<div style="position:absolute;right:537.68px;top:201.73px;line-height:0;font-size:8.3px;font-weight:400;color:#2a2a2a;white-space:nowrap;">62</div>
<div style="position:absolute;right:497.37px;top:201.73px;line-height:0;font-size:8.3px;font-weight:400;color:#2a2a2a;white-space:nowrap;">30</div>
<div style="position:absolute;right:457.06px;top:201.73px;line-height:0;font-size:8.3px;font-weight:400;color:#2a2a2a;white-space:nowrap;">70</div>
<div style="position:absolute;right:416.75px;top:201.73px;line-height:0;font-size:8.3px;font-weight:400;color:#2a2a2a;white-space:nowrap;">77</div>
<div style="position:absolute;right:376.44px;top:201.73px;line-height:0;font-size:8.3px;font-weight:400;color:#2a2a2a;white-space:nowrap;">15</div>
<div style="position:absolute;left:24.89px;top:214.30px;line-height:0;font-size:8.3px;font-weight:400;color:#2a2a2a;white-space:nowrap;transform:scaleX(0.7799);transform-origin:0 0;">5</div>
<div style="position:absolute;left:65.20px;top:214.30px;line-height:0;font-size:8.3px;font-weight:400;color:#2a2a2a;white-space:nowrap;transform:scaleX(0.9458);transform-origin:0 0;">Product 5</div>
<div style="position:absolute;right:537.68px;top:214.30px;line-height:0;font-size:8.3px;font-weight:400;color:#2a2a2a;white-space:nowrap;">32</div>
<div style="position:absolute;right:497.37px;top:214.30px;line-height:0;font-size:8.3px;font-weight:400;color:#2a2a2a;white-space:nowrap;">17</div>
<div style="position:absolute;right:457.06px;top:214.30px;line-height:0;font-size:8.3px;font-weight:400;color:#2a2a2a;white-space:nowrap;">23</div>
<div style="position:absolute;right:416.75px;top:214.30px;line-height:0;font-size:8.3px;font-weight:400;color:#2a2a2a;white-space:nowrap;">60</div>
<div style="position:absolute;right:376.44px;top:214.30px;line-height:0;font-size:8.3px;font-weight:400;color:#2a2a2a;white-space:nowrap;">61</div>
<div style="position:absolute;left:22.4px;top:143.6px;width:41.6px;height:14.2px;box-sizing:border-box;border:1.4px solid #217346"></div>
<div style="position:absolute;left:62.40px;top:156.20px;width:1.80px;height:1.80px;background:#217346;"></div>
<div style="position:absolute;left:63.2px;top:232.3px;width:357.7px;height:178.5px;background:#fff;box-sizing:border-box;border:0.9px solid #bdbdbd"></div>
<div style="position:absolute;left:107.40px;top:370.75px;width:240.30px;height:0.90px;background:#bdbdbd;"></div>
<div style="position:absolute;right:580.00px;top:371.40px;line-height:0;font-size:7.8px;font-weight:400;color:#595959;white-space:nowrap;">0</div>
<div style="position:absolute;left:107.40px;top:349.25px;width:240.30px;height:0.90px;background:#c6c6c6;"></div>
<div style="position:absolute;right:580.00px;top:349.90px;line-height:0;font-size:7.8px;font-weight:400;color:#595959;white-space:nowrap;">20</div>
<div style="position:absolute;left:107.40px;top:327.75px;width:240.30px;height:0.90px;background:#c6c6c6;"></div>
<div style="position:absolute;right:580.00px;top:328.40px;line-height:0;font-size:7.8px;font-weight:400;color:#595959;white-space:nowrap;">40</div>
<div style="position:absolute;left:107.40px;top:306.25px;width:240.30px;height:0.90px;background:#c6c6c6;"></div>
<div style="position:absolute;right:580.00px;top:306.90px;line-height:0;font-size:7.8px;font-weight:400;color:#595959;white-space:nowrap;">60</div>
<div style="position:absolute;left:107.40px;top:284.75px;width:240.30px;height:0.90px;background:#c6c6c6;"></div>
<div style="position:absolute;right:580.00px;top:285.40px;line-height:0;font-size:7.8px;font-weight:400;color:#595959;white-space:nowrap;">80</div>
<div style="position:absolute;left:107.40px;top:263.25px;width:240.30px;height:0.90px;background:#c6c6c6;"></div>
<div style="position:absolute;right:580.00px;top:263.90px;line-height:0;font-size:7.8px;font-weight:400;color:#595959;white-space:nowrap;">100</div>
<div style="position:absolute;left:107.40px;top:241.75px;width:240.30px;height:0.90px;background:#c6c6c6;"></div>
<div style="position:absolute;right:580.00px;top:242.40px;line-height:0;font-size:7.8px;font-weight:400;color:#595959;white-space:nowrap;">120</div>
<div style="position:absolute;left:106.95px;top:242.20px;width:0.90px;height:129.00px;background:#bdbdbd;"></div>
<div style="position:absolute;left:-168.50px;width:600px;text-align:center;top:382.56px;line-height:0;font-size:7.9px;font-weight:400;color:#595959;white-space:nowrap;">Month 1</div>
<div style="position:absolute;left:-120.50px;width:600px;text-align:center;top:382.56px;line-height:0;font-size:7.9px;font-weight:400;color:#595959;white-space:nowrap;">Month 2</div>
<div style="position:absolute;left:-72.50px;width:600px;text-align:center;top:382.56px;line-height:0;font-size:7.9px;font-weight:400;color:#595959;white-space:nowrap;">Month 3</div>
<div style="position:absolute;left:-24.50px;width:600px;text-align:center;top:382.56px;line-height:0;font-size:7.9px;font-weight:400;color:#595959;white-space:nowrap;">Month 4</div>
<div style="position:absolute;left:23.50px;width:600px;text-align:center;top:382.56px;line-height:0;font-size:7.9px;font-weight:400;color:#595959;white-space:nowrap;">Month 5</div>
<div style="position:absolute;left:-72.50px;width:600px;text-align:center;top:394.74px;line-height:0;font-size:7.4px;font-weight:700;color:#333;white-space:nowrap;">Months</div>
<div style="position:absolute;left:80.2px;top:306.5px;width:0;height:0"><div style="position:absolute;left:-100px;width:200px;top:-0px;text-align:center;line-height:0;font-size:7.2px;font-weight:700;color:#333;white-space:nowrap;transform:rotate(-90deg);transform-origin:100px 0">Sales (per unit)</div></div>
<div style="position:absolute;left:378.60px;top:291.27px;line-height:0;font-size:7.6px;font-weight:400;color:#595959;white-space:nowrap;transform:scaleX(0.9960);transform-origin:0 0;">Product 1</div>
<div style="position:absolute;left:378.60px;top:306.45px;line-height:0;font-size:7.6px;font-weight:400;color:#595959;white-space:nowrap;transform:scaleX(0.9960);transform-origin:0 0;">Product 2</div>
<div style="position:absolute;left:378.60px;top:321.63px;line-height:0;font-size:7.6px;font-weight:400;color:#595959;white-space:nowrap;transform:scaleX(0.9960);transform-origin:0 0;">Product 3</div>
<div style="position:absolute;left:378.60px;top:336.81px;line-height:0;font-size:7.6px;font-weight:400;color:#595959;white-space:nowrap;transform:scaleX(0.9960);transform-origin:0 0;">Product 4</div>
<div style="position:absolute;left:378.60px;top:351.99px;line-height:0;font-size:7.6px;font-weight:400;color:#595959;white-space:nowrap;transform:scaleX(0.9960);transform-origin:0 0;">Product 5</div>
<svg style="position:absolute;left:0;top:0" width="680" height="445"><polyline points="131.50,272.30 179.50,264.77 227.50,287.35 275.50,348.62 323.50,324.97" fill="none" stroke="#2e75b6" stroke-width="1.75" stroke-linejoin="round"/><polyline points="131.50,327.12 179.50,320.68 227.50,268.00 275.50,363.68 323.50,322.82" fill="none" stroke="#c0282d" stroke-width="1.75" stroke-linejoin="round"/><polyline points="131.50,317.45 179.50,286.27 227.50,362.60 275.50,324.97 323.50,319.60" fill="none" stroke="#8cbb3c" stroke-width="1.75" stroke-linejoin="round"/><polyline points="131.50,304.55 179.50,338.95 227.50,295.95 275.50,288.42 323.50,355.07" fill="none" stroke="#7a4fa3" stroke-width="1.75" stroke-linejoin="round"/><polyline points="131.50,336.80 179.50,352.93 227.50,346.47 275.50,306.70 323.50,305.62" fill="none" stroke="#37a7c9" stroke-width="1.75" stroke-linejoin="round"/><line x1="360.1" x2="377.2" y1="291.30" y2="291.30" stroke="#2e75b6" stroke-width="1.75"/><line x1="360.1" x2="377.2" y1="306.48" y2="306.48" stroke="#c0282d" stroke-width="1.75"/><line x1="360.1" x2="377.2" y1="321.66" y2="321.66" stroke="#8cbb3c" stroke-width="1.75"/><line x1="360.1" x2="377.2" y1="336.84" y2="336.84" stroke="#7a4fa3" stroke-width="1.75"/><line x1="360.1" x2="377.2" y1="352.02" y2="352.02" stroke="#37a7c9" stroke-width="1.75"/></svg>
</body></html>
